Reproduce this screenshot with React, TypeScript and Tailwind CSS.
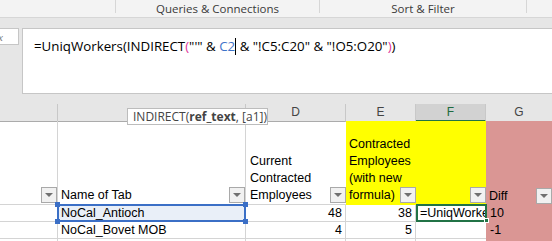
import React from 'react'

const cols = 'grid grid-cols-[58px_188px_100px_70px_70px_66px]'

function Drop() {
  return (
    <div className="absolute right-0 bottom-[1px] flex h-[16px] w-[16px] items-center justify-center border border-[#a9a9a9] bg-[#f1f1f1]">
      <svg width="8" height="4" viewBox="0 0 8 4">
        <path d="M0 0h8L4 4z" fill="#707070" />
      </svg>
    </div>
  )
}

export default function App() {
  return (
    <div className="relative h-[241px] w-[552px] overflow-hidden bg-white font-['Liberation_Sans',Arial,sans-serif] text-[12.5px] text-black">
      {/* ribbon group labels */}
      <div className="flex h-[18px] border-b border-[#d6d6d6] bg-[#f3f3f3] font-['Open_Sans',sans-serif] text-[11.5px] leading-[18px] text-[#3a3a3a]">
        <div className="w-[115px]" />
        <div className="h-[13px] w-px bg-[#d6d6d6]" />
        <div className="w-[203px] text-center">Queries &amp; Connections</div>
        <div className="h-[13px] w-px bg-[#d6d6d6]" />
        <div className="w-[206px] text-center">Sort &amp; Filter</div>
        <div className="h-[13px] w-px bg-[#d6d6d6]" />
      </div>

      {/* formula bar */}
      <div className="flex h-[86px] items-start bg-[#e6e6e6] pt-[10px]">
        <div className="flex h-[17px] w-[19px] items-center overflow-hidden border border-l-0 border-[#c6c6c6] bg-white">
          <span className="-ml-[5px] translate-y-[1px] font-['Liberation_Serif',serif] text-[11px] italic text-[#777]">fx</span>
        </div>
        <div className="ml-[3px] h-[66px] flex-1 border border-r-0 border-[#c6c6c6] bg-white pl-[11px] pt-[5px] font-['Open_Sans',sans-serif] text-[13.3px] leading-[18px] whitespace-nowrap">
          =UniqWorkers(INDIRECT<span className="text-[#e0359c]">(</span>"'" &amp; <span className="text-[#3f73c9]">C2</span>
          <span className="inline-block h-[17px] w-px translate-y-[4px] bg-black align-baseline" />
          {' '}&amp; "!C5:C20" &amp; "!O5:O20"<span className="text-[#e0359c]">)</span>)
        </div>
      </div>

      {/* column headers */}
      <div className={`${cols} h-[17px] bg-[#e6e6e6] text-[12px] leading-[16px] text-[#444]`}>
        <div className="border-r border-b border-r-[#c8c8c8] border-b-[#ababab]" />
        <div className="border-r border-b border-r-[#c8c8c8] border-b-[#ababab]" />
        <div className="border-r border-b border-r-[#c8c8c8] border-b-[#ababab] text-center">D</div>
        <div className="border-r border-b border-r-[#c8c8c8] border-b-[#ababab] text-center">E</div>
        <div className="border-r border-b-2 border-r-[#c8c8c8] border-b-[#217346] bg-[#d2d2d2] text-center text-[#1e6b40]">F</div>
        <div className="border-b border-b-[#ababab] text-center">G</div>
      </div>

      {/* sheet */}
      <div className={`${cols} leading-[17px]`}>
        {/* header row */}
        <div className="relative h-[84px] border-r border-b border-[#d4d4d4]">
          <Drop />
        </div>
        <div className="relative flex h-[84px] items-end border-r border-b border-[#d4d4d4] pb-[1px] pl-[3px]">
          <span className="translate-y-[1px]">Name of Tab</span>
          <Drop />
        </div>
        <div className="relative flex h-[84px] items-end border-b border-[#d4d4d4] pb-[1px] pl-[4px]">
          <span className="translate-y-[1px]">Current<br />Contracted<br />Employees</span>
          <Drop />
        </div>
        <div className="relative flex h-[84px] items-end border-b border-[#ffff00] bg-[#ffff00] pb-[1px] pl-[3px]">
          <span className="translate-y-[1px] whitespace-nowrap">Contracted<br />Employees<br />(with new<br />formula)</span>
          <Drop />
        </div>
        <div className="relative h-[84px] border-b border-[#ffff00] bg-[#ffff00]">
          <Drop />
        </div>
        <div className="relative flex h-[84px] items-end bg-[#da9694] pb-[1px] pl-[3px]">
          <span className="translate-y-[1px]">Diff</span>
          <Drop />
        </div>

        {/* row 1 */}
        <div className="h-[17px] border-r border-b border-[#d4d4d4]" />
        <div className="relative h-[17px] border-r border-b border-[#d4d4d4] bg-[#e9eff8] pl-[3px]">
          NoCal_Antioch
          <div className="absolute -top-[1px] -left-[1px] h-[18px] w-[189px] border-2 border-[#3b6fc6]" />
          <div className="absolute -top-[3px] -left-[3px] h-[5px] w-[5px] bg-[#3b6fc6]" />
          <div className="absolute -top-[3px] -right-[3px] h-[5px] w-[5px] bg-[#3b6fc6]" />
          <div className="absolute -bottom-[3px] -left-[3px] h-[5px] w-[5px] bg-[#3b6fc6]" />
          <div className="absolute -right-[3px] -bottom-[3px] h-[5px] w-[5px] bg-[#3b6fc6]" />
        </div>
        <div className="h-[17px] border-r border-b border-[#d4d4d4] pr-[3px] text-right">48</div>
        <div className="h-[17px] border-r border-b border-[#d4d4d4] pr-[3px] text-right">38</div>
        <div className="relative z-10 h-[17px] border-b border-[#d4d4d4]">
          <div className="absolute -top-[1px] left-0 h-[18px] w-[71px] overflow-hidden whitespace-nowrap border-2 border-[#217346] bg-white pl-[2px] leading-[14px]">
            =UniqWorke
          </div>
          <div className="absolute -right-[3px] -bottom-[2px] h-[5px] w-[5px] border border-white bg-[#217346]" />
        </div>
        <div className="h-[17px] bg-[#da9694] pl-[4px]">10</div>

        {/* row 2 */}
        <div className="h-[17px] border-r border-b border-[#d4d4d4]" />
        <div className="h-[17px] border-r border-b border-[#d4d4d4] pl-[3px]">NoCal_Bovet MOB</div>
        <div className="h-[17px] border-r border-b border-[#d4d4d4] pr-[3px] text-right">4</div>
        <div className="h-[17px] border-r border-b border-[#d4d4d4] pr-[3px] text-right">5</div>
        <div className="h-[17px] border-b border-[#d4d4d4]" />
        <div className="h-[17px] bg-[#da9694] pl-[4px]">-1</div>

        {/* row 3 */}
        <div className="h-[17px] border-r border-[#d4d4d4]" />
        <div className="h-[17px] border-r border-[#d4d4d4]" />
        <div className="h-[17px] border-r border-[#d4d4d4]" />
        <div className="h-[17px] border-r border-[#d4d4d4]" />
        <div className="h-[17px]" />
        <div className="h-[17px] bg-[#da9694]" />
      </div>

      {/* function tooltip */}
      <div className="absolute top-[108px] left-[127px] flex h-[17px] w-[141px] items-center border border-[#bcbcbc] bg-white pl-[5px] font-['Open_Sans',sans-serif] text-[12px] text-[#444]">
        INDIRECT(<b>ref_text</b>, [a1])
      </div>
    </div>
  )
}
